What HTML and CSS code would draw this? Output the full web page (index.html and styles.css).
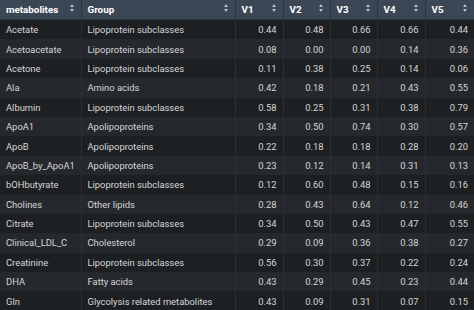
FILE: index.html
```html
<!DOCTYPE html>
<html>
<head>
<meta charset="utf-8">
<link rel="stylesheet" href="styles.css">
</head>
<body>
<table class="grid">
  <colgroup>
    <col class="c-met"><col class="c-grp"><col class="c-v1"><col class="c-v2"><col class="c-v3"><col class="c-v4"><col class="c-v5">
  </colgroup>
  <thead>
    <tr>
      <th><span>metabolites</span><i class="sort"></i></th>
      <th><span>Group</span><i class="sort"></i></th>
      <th><span>V1</span><i class="sort"></i></th>
      <th><span>V2</span><i class="sort"></i></th>
      <th><span>V3</span><i class="sort"></i></th>
      <th><span>V4</span><i class="sort"></i></th>
      <th><span>V5</span><i class="sort"></i></th>
    </tr>
  </thead>
  <tbody>
    <tr><td>Acetate</td><td>Lipoprotein subclasses</td><td class="n">0.44</td><td class="n">0.48</td><td class="n">0.66</td><td class="n">0.66</td><td class="n">0.44</td></tr>
    <tr><td>Acetoacetate</td><td>Lipoprotein subclasses</td><td class="n">0.08</td><td class="n">0.00</td><td class="n">0.00</td><td class="n">0.14</td><td class="n">0.36</td></tr>
    <tr><td>Acetone</td><td>Lipoprotein subclasses</td><td class="n">0.11</td><td class="n">0.38</td><td class="n">0.25</td><td class="n">0.14</td><td class="n">0.06</td></tr>
    <tr><td>Ala</td><td>Amino acids</td><td class="n">0.42</td><td class="n">0.18</td><td class="n">0.21</td><td class="n">0.43</td><td class="n">0.55</td></tr>
    <tr><td>Albumin</td><td>Lipoprotein subclasses</td><td class="n">0.58</td><td class="n">0.25</td><td class="n">0.31</td><td class="n">0.38</td><td class="n">0.79</td></tr>
    <tr><td>ApoA1</td><td>Apolipoproteins</td><td class="n">0.34</td><td class="n">0.50</td><td class="n">0.74</td><td class="n">0.30</td><td class="n">0.57</td></tr>
    <tr><td>ApoB</td><td>Apolipoproteins</td><td class="n">0.22</td><td class="n">0.18</td><td class="n">0.18</td><td class="n">0.28</td><td class="n">0.20</td></tr>
    <tr><td>ApoB_by_ApoA1</td><td>Apolipoproteins</td><td class="n">0.23</td><td class="n">0.12</td><td class="n">0.14</td><td class="n">0.31</td><td class="n">0.13</td></tr>
    <tr><td>bOHbutyrate</td><td>Lipoprotein subclasses</td><td class="n">0.12</td><td class="n">0.60</td><td class="n">0.48</td><td class="n">0.15</td><td class="n">0.16</td></tr>
    <tr><td>Cholines</td><td>Other lipids</td><td class="n">0.28</td><td class="n">0.43</td><td class="n">0.64</td><td class="n">0.12</td><td class="n">0.46</td></tr>
    <tr><td>Citrate</td><td>Lipoprotein subclasses</td><td class="n">0.34</td><td class="n">0.50</td><td class="n">0.43</td><td class="n">0.47</td><td class="n">0.55</td></tr>
    <tr><td>Clinical_LDL_C</td><td>Cholesterol</td><td class="n">0.29</td><td class="n">0.09</td><td class="n">0.36</td><td class="n">0.38</td><td class="n">0.27</td></tr>
    <tr><td>Creatinine</td><td>Lipoprotein subclasses</td><td class="n">0.56</td><td class="n">0.30</td><td class="n">0.37</td><td class="n">0.22</td><td class="n">0.24</td></tr>
    <tr><td>DHA</td><td>Fatty acids</td><td class="n">0.43</td><td class="n">0.29</td><td class="n">0.45</td><td class="n">0.23</td><td class="n">0.44</td></tr>
    <tr><td>Gln</td><td>Glycolysis related metabolites</td><td class="n">0.43</td><td class="n">0.09</td><td class="n">0.31</td><td class="n">0.07</td><td class="n">0.15</td></tr>
  </tbody>
</table>
</body>
</html>
```
FILE: styles.css
```css
html, body {
  margin: 0;
  padding: 0;
  background: #1e2124;
}
.grid {
  width: 474px;
  border-collapse: collapse;
  table-layout: fixed;
  font-family: Roboto, "Open Sans", sans-serif;
  font-size: 9.4px;
  color: #d6d6d6;
}
.c-met { width: 81px; }
.c-grp { width: 154px; }
.c-v1 { width: 48px; }
.c-v2 { width: 47px; }
.c-v3 { width: 47px; }
.c-v4 { width: 48px; }
.c-v5 { width: 49px; }

.grid th {
  height: 19px;
  padding: 0 0 0 6px;
  background: #3c4755;
  color: #ffffff;
  font-weight: 700;
  font-size: 9.8px;
  text-align: left;
  position: relative;
  border-right: 1px solid #2b3540;
  border-bottom: 1px solid #2b3540;
  white-space: nowrap;
}
.grid th:last-child { border-right: none; }
.sort {
  position: absolute;
  right: 6px;
  top: 4px;
  width: 5px;
  height: 8px;
}
.sort::before, .sort::after {
  content: "";
  position: absolute;
  left: 0;
  border-left: 2.5px solid transparent;
  border-right: 2.5px solid transparent;
}
.sort::before {
  top: 0;
  border-bottom: 3px solid #b4bcc6;
}
.sort::after {
  bottom: 0;
  border-top: 3px solid #b4bcc6;
}
.grid td {
  height: 19.4px;
  padding: 0 5px 0 6px;
  border-right: 1px solid #2c3035;
  white-space: nowrap;
  overflow: hidden;
}
.grid td:last-child { border-right: none; }
.grid td.n { text-align: right; padding-right: 6px; }
.grid tbody tr:nth-child(odd) { background: #1d2023; }
.grid tbody tr:nth-child(even) { background: #25292d; }
```
